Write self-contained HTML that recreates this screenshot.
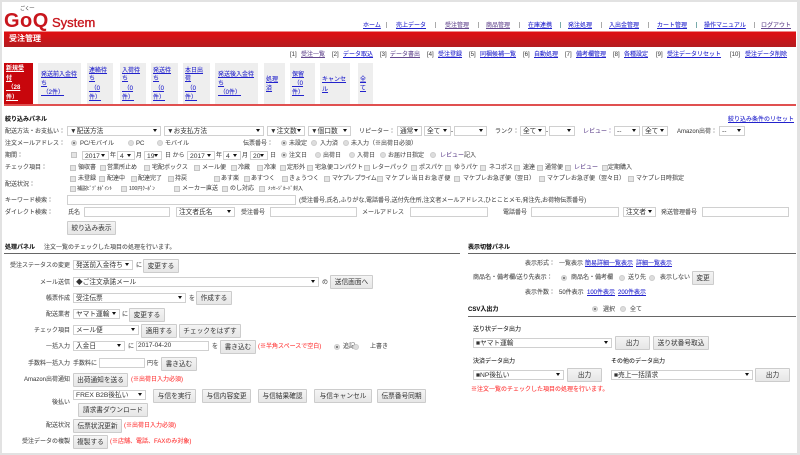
<!DOCTYPE html>
<html lang="ja"><head><meta charset="utf-8"><title>GoQ System 受注管理</title>
<style>
html,body{margin:0;padding:0;background:#fff}
body{width:800px;height:455px;position:relative;overflow:hidden;font-family:"Liberation Sans","Noto Sans CJK JP",sans-serif;color:#4c4c4c;font-size:6px;filter:blur(.25px)}
.t{position:absolute;white-space:nowrap;font-size:6px;line-height:8px;margin-top:1px;-webkit-text-stroke:.08px currentColor}
.t a,a.t{color:#22c;text-decoration:underline}
.v{color:#64488f!important}
.bd{font-weight:bold;color:#111}
.red{color:#f33}
.s{position:absolute;box-sizing:border-box;background:#fff;border:1px solid #d0d0d0;font-size:6.7px;line-height:8px;padding:1px 0 0 2px;color:#333;white-space:nowrap;overflow:hidden}
.s:after{content:"";position:absolute;right:3px;top:2px;border-left:2px solid transparent;border-right:2px solid transparent;border-top:3px solid #111}
.i{position:absolute;box-sizing:border-box;background:#fff;border:1px solid #d0d0d0;font-size:6.5px;line-height:8px;padding:0 0 0 1px;color:#333}
.b{position:absolute;box-sizing:border-box;background:linear-gradient(#f4f4f4,#e6e6e6);border:1px solid #ccc;font-size:6.7px;text-align:center;color:#333;white-space:nowrap;border-radius:1px;padding-top:1px}
.c{position:absolute;box-sizing:border-box;width:6px;height:6px;background:#e4e4e4;border:1px solid #c4c4c4;margin-left:-1px;margin-top:-.5px}
.r{position:absolute;box-sizing:border-box;width:6px;height:6px;background:#ddd;border:1px solid #ccc;border-radius:50%}
.r.on:after{content:"";position:absolute;left:1px;top:1px;width:2px;height:2px;background:#666;border-radius:50%}
.g{position:absolute;background:#eee}
.u{color:#22c;text-decoration:underline;position:absolute;white-space:nowrap;font-size:6px;line-height:11px;margin-top:1px;-webkit-text-stroke:.08px currentColor}
.l{position:absolute;height:1px;background:#666}
.p{position:absolute;width:1px;height:6px;background:#aaa;top:22px}
</style></head><body>
<!-- frame -->
<div style="position:absolute;left:0;top:0;width:800px;height:2px;background:#e2e2e2"></div>
<div style="position:absolute;left:0;top:0;width:2px;height:455px;background:#e2e2e2"></div>
<div style="position:absolute;left:797px;top:0;width:3px;height:455px;background:#e2e2e2"></div>
<div style="position:absolute;left:0;top:453px;width:800px;height:2px;background:#e2e2e2"></div>
<!-- logo -->
<div style="position:absolute;left:20px;top:6px;font-size:5px;line-height:6px;color:#333;letter-spacing:-.3px">ごく一</div>
<div style="position:absolute;left:4px;top:9px;font:bold 20px/24px 'Liberation Sans',sans-serif;color:#c8161d;letter-spacing:.5px">GoQ</div>
<div style="position:absolute;left:52px;top:15px;font:13px/16px 'Liberation Sans',sans-serif;color:#c8161d;-webkit-text-stroke:.35px #c8161d">System</div>
<!-- nav -->
<a class="t" style="left:363px;top:21px">ホーム</a><i class="p" style="left:386px"></i>
<a class="t" style="left:396px;top:21px">売上データ</a><i class="p" style="left:435px"></i>
<a class="t v" style="left:445px;top:21px">受注管理</a><i class="p" style="left:478px"></i>
<a class="t v" style="left:486px;top:21px">商品管理</a><i class="p" style="left:519px"></i>
<a class="t" style="left:528px;top:21px">在庫連携</a><i class="p" style="left:560px;background:#7aa"></i>
<a class="t" style="left:568px;top:21px">発注処理</a><i class="p" style="left:601px"></i>
<a class="t" style="left:609px;top:21px">入出金管理</a><i class="p" style="left:648px"></i>
<a class="t" style="left:657px;top:21px">カート管理</a><i class="p" style="left:696px;background:#7aa"></i>
<a class="t" style="left:704px;top:21px">操作マニュアル</a><i class="p" style="left:754px"></i>
<a class="t v" style="left:761px;top:21px">ログアウト</a>
<!-- red bar -->
<div style="position:absolute;left:4px;top:31px;width:792px;height:16px;background:linear-gradient(#e00f12,#b41c20);border-top:1px solid #e88;box-sizing:border-box"></div>
<div style="position:absolute;left:9px;top:34px;color:#fff;font-size:8px;line-height:10px;font-weight:bold">受注管理</div>
<!-- sub nav -->
<div class="t" style="left:290px;top:50px">[1]</div><a class="t v" style="left:301px;top:50px">受注一覧</a>
<div class="t" style="left:332px;top:50px">[2]</div><a class="t" style="left:343px;top:50px">データ取込</a>
<div class="t" style="left:380px;top:50px">[3]</div><a class="t v" style="left:390px;top:50px">データ書出</a>
<div class="t" style="left:427px;top:50px">[4]</div><a class="t" style="left:438px;top:50px">受注登録</a>
<div class="t" style="left:469px;top:50px">[5]</div><a class="t" style="left:480px;top:50px">同梱候補一覧</a>
<div class="t" style="left:523px;top:50px">[6]</div><a class="t" style="left:534px;top:50px">自動処理</a>
<div class="t" style="left:565px;top:50px">[7]</div><a class="t" style="left:576px;top:50px">備考欄管理</a>
<div class="t" style="left:613px;top:50px">[8]</div><a class="t" style="left:624px;top:50px">各種設定</a>
<div class="t" style="left:656px;top:50px">[9]</div><a class="t" style="left:667px;top:50px">受注データリセット</a>
<div class="t" style="left:730px;top:50px">[10]</div><a class="t" style="left:745px;top:50px">受注データ削除</a>
<!-- tabs -->
<div class="g" style="left:4px;top:63px;width:29px;height:42px;background:#c8060c"></div>
<div style="position:absolute;left:6px;top:65px;width:27px;color:#fff;font-weight:bold;font-size:6px;line-height:9.5px;text-decoration:underline">新規受<br>付<br>&nbsp;（28<br>件）</div>
<div class="g" style="left:38px;top:63px;width:43px;height:42px"></div>
<div class="g" style="left:87px;top:63px;width:26px;height:42px"></div>
<div class="g" style="left:120px;top:63px;width:26px;height:42px"></div>
<div class="g" style="left:151px;top:63px;width:27px;height:42px"></div>
<div class="g" style="left:183px;top:63px;width:27px;height:42px"></div>
<div class="g" style="left:215px;top:63px;width:43px;height:42px"></div>
<div class="g" style="left:264px;top:63px;width:21px;height:42px"></div>
<div class="g" style="left:290px;top:63px;width:25px;height:42px"></div>
<div class="g" style="left:320px;top:63px;width:30px;height:42px"></div>
<div class="g" style="left:358px;top:63px;width:15px;height:42px"></div>
<div class="u" style="left:41px;top:69px">発送前入金待</div><div class="u" style="left:41px;top:78px">ち</div><div class="u" style="left:41px;top:87px">&nbsp;（2件）</div>
<div class="u" style="left:89px;top:65px">連絡待</div><div class="u" style="left:89px;top:73px">ち</div><div class="u" style="left:89px;top:83px">&nbsp;（0</div><div class="u" style="left:89px;top:92px">件）</div>
<div class="u" style="left:122px;top:65px">入荷待</div><div class="u" style="left:122px;top:73px">ち</div><div class="u" style="left:122px;top:83px">&nbsp;（0</div><div class="u" style="left:122px;top:92px">件）</div>
<div class="u" style="left:153px;top:65px">発送待</div><div class="u" style="left:153px;top:73px">ち</div><div class="u" style="left:153px;top:83px">&nbsp;（0</div><div class="u" style="left:153px;top:92px">件）</div>
<div class="u" style="left:185px;top:65px">本日出</div><div class="u" style="left:185px;top:73px">荷</div><div class="u" style="left:185px;top:83px">&nbsp;（0</div><div class="u" style="left:185px;top:92px">件）</div>
<div class="u" style="left:218px;top:69px">発送後入金待</div><div class="u" style="left:218px;top:78px">ち</div><div class="u" style="left:218px;top:87px">&nbsp;（0件）</div>
<div class="u" style="left:266px;top:74px">処理</div><div class="u" style="left:266px;top:83px">済</div>
<div class="u" style="left:292px;top:69px">保留</div><div class="u" style="left:292px;top:78px">&nbsp;（0</div><div class="u" style="left:292px;top:87px">件）</div>
<div class="u" style="left:322px;top:74px">キャンセ</div><div class="u" style="left:322px;top:84px">ル</div>
<div class="u" style="left:360px;top:74px">全</div><div class="u" style="left:360px;top:83px">て</div>
<div style="position:absolute;left:4px;top:104px;width:792px;height:2px;background:#e05050"></div>
<!-- filter panel -->
<div class="t bd" style="left:5px;top:115px">絞り込みパネル</div>
<a class="t" style="left:728px;top:115px">絞り込み条件のリセット</a>
<div class="t" style="left:5px;top:127px">配送方法・お支払い：</div>
<div class="s" style="left:67px;top:126px;width:94px;height:10px">▼配送方法</div>
<div class="s" style="left:164px;top:126px;width:100px;height:10px">▼お支払方法</div>
<div class="s" style="left:267px;top:126px;width:38px;height:10px">▼注文数</div>
<div class="s" style="left:308px;top:126px;width:43px;height:10px">▼個口数</div>
<div class="t" style="left:359px;top:127px">リピーター：</div>
<div class="s" style="left:397px;top:126px;width:25px;height:10px">通常</div>
<div class="s" style="left:424px;top:126px;width:27px;height:10px">全て</div><div class="t" style="left:451px;top:127px">-</div>
<div class="s" style="left:454px;top:126px;width:33px;height:10px"></div>
<div class="t" style="left:495px;top:127px">ランク：</div>
<div class="s" style="left:520px;top:126px;width:26px;height:10px">全て</div><div class="t" style="left:546px;top:127px">-</div>
<div class="s" style="left:549px;top:126px;width:26px;height:10px"></div>
<div class="t v" style="left:583px;top:127px">レビュー：</div>
<div class="s" style="left:614px;top:126px;width:26px;height:10px">--</div>
<div class="s" style="left:642px;top:126px;width:26px;height:10px">全て</div>
<div class="t" style="left:677px;top:127px">Amazon出荷：</div>
<div class="s" style="left:719px;top:126px;width:26px;height:10px">--</div>

<div class="t" style="left:5px;top:139px">注文メールアドレス：</div>
<i class="r on" style="left:71px;top:140px"></i><div class="t" style="left:80px;top:139px">PC/モバイル</div>
<i class="r" style="left:128px;top:140px"></i><div class="t" style="left:136px;top:139px">PC</div>
<i class="r" style="left:157px;top:140px"></i><div class="t" style="left:165px;top:139px">モバイル</div>
<div class="t" style="left:243px;top:139px">伝票番号：</div>
<i class="r on" style="left:281px;top:140px"></i><div class="t" style="left:289px;top:139px">未設定</div>
<i class="r" style="left:311px;top:140px"></i><div class="t" style="left:320px;top:139px">入力済</div>
<i class="r" style="left:343px;top:140px"></i><div class="t" style="left:351px;top:139px">未入力（※出荷日必須）</div>

<div class="t" style="left:5px;top:151px">期間：</div>
<i class="c" style="left:72px;top:152px"></i>
<div class="s" style="left:82px;top:151px;width:27px;height:9px">2017</div><div class="t" style="left:110px;top:151px">年</div>
<div class="s" style="left:117px;top:151px;width:18px;height:9px">4</div><div class="t" style="left:136px;top:151px">月</div>
<div class="s" style="left:144px;top:151px;width:18px;height:9px">19</div><div class="t" style="left:165px;top:151px">日 から</div>
<div class="s" style="left:187px;top:151px;width:28px;height:9px">2017</div><div class="t" style="left:216px;top:151px">年</div>
<div class="s" style="left:223px;top:151px;width:18px;height:9px">4</div><div class="t" style="left:242px;top:151px">月</div>
<div class="s" style="left:250px;top:151px;width:18px;height:9px">20</div><div class="t" style="left:270px;top:151px">日</div>
<i class="r on" style="left:281px;top:152px"></i><div class="t" style="left:289px;top:151px">注文日</div>
<i class="r" style="left:315px;top:152px"></i><div class="t" style="left:323px;top:151px">出荷日</div>
<i class="r" style="left:349px;top:152px"></i><div class="t" style="left:357px;top:151px">入荷日</div>
<i class="r" style="left:380px;top:152px"></i><div class="t" style="left:388px;top:151px">お届け日指定</div>
<i class="r" style="left:430px;top:152px"></i><div class="t" style="left:440px;top:151px"><span class="v">レビュー</span>記入</div>

<div class="t" style="left:5px;top:163px">チェック項目：</div>
<i class="c" style="left:71px;top:165px"></i><div class="t" style="left:78px;top:163px">領収書</div>
<i class="c" style="left:101px;top:165px"></i><div class="t" style="left:107px;top:163px">営業所止め</div>
<i class="c" style="left:145px;top:165px"></i><div class="t" style="left:152px;top:163px">宅配ボックス</div>
<i class="c" style="left:195px;top:165px"></i><div class="t" style="left:202px;top:163px">メール便</div>
<i class="c" style="left:232px;top:165px"></i><div class="t" style="left:238px;top:163px">冷蔵</div>
<i class="c" style="left:258px;top:165px"></i><div class="t" style="left:264px;top:163px">冷凍</div>
<i class="c" style="left:281px;top:165px"></i><div class="t" style="left:287px;top:163px">定形外</div>
<i class="c" style="left:308px;top:165px"></i><div class="t" style="left:315px;top:163px">宅急便コンパクト</div>
<i class="c" style="left:365px;top:165px"></i><div class="t" style="left:372px;top:163px">レターパック</div>
<i class="c" style="left:412px;top:165px"></i><div class="t" style="left:419px;top:163px">ポスパケ</div>
<i class="c" style="left:446px;top:165px"></i><div class="t" style="left:454px;top:163px">ゆうパケ</div>
<i class="c" style="left:481px;top:165px"></i><div class="t" style="left:489px;top:163px">ネコポス</div>
<i class="c" style="left:515px;top:165px"></i><div class="t" style="left:523px;top:163px">速達</div>
<i class="c" style="left:538px;top:165px"></i><div class="t" style="left:545px;top:163px">通常便</div>
<i class="c" style="left:566px;top:165px"></i><div class="t v" style="left:574px;top:163px">レビュー</div>
<i class="c" style="left:603px;top:165px"></i><div class="t" style="left:608px;top:163px">定期購入</div>

<div class="t" style="left:5px;top:180px">配送状況：</div>
<i class="c" style="left:71px;top:176px"></i><div class="t" style="left:78px;top:174px">未登録</div>
<i class="c" style="left:100px;top:176px"></i><div class="t" style="left:107px;top:174px">配達中</div>
<i class="c" style="left:132px;top:176px"></i><div class="t" style="left:138px;top:174px">配達完了</div>
<i class="c" style="left:169px;top:176px"></i><div class="t" style="left:175px;top:174px">持戻</div>
<i class="c" style="left:215px;top:176px"></i><div class="t" style="left:221px;top:174px">あす楽</div>
<i class="c" style="left:245px;top:176px"></i><div class="t" style="left:251px;top:174px">あすつく</div>
<i class="c" style="left:283px;top:176px"></i><div class="t" style="left:289px;top:174px">きょうつく</div>
<i class="c" style="left:325px;top:176px"></i><div class="t" style="left:332px;top:174px;letter-spacing:-.6px">マケプレ プライム</div>
<i class="c" style="left:378px;top:176px"></i><div class="t" style="left:385px;top:174px;letter-spacing:.6px">マケプレ当日お急ぎ便</div>
<i class="c" style="left:455px;top:176px"></i><div class="t" style="left:463px;top:174px">マケプレお急ぎ便（翌日）</div>
<i class="c" style="left:540px;top:176px"></i><div class="t" style="left:547px;top:174px">マケプレお急ぎ便（翌々日）</div>
<i class="c" style="left:629px;top:176px"></i><div class="t" style="left:636px;top:174px">マケプレ日時指定</div>

<i class="c" style="left:71px;top:186px"></i><div class="t" style="left:77px;top:184px;font-size:5px">補説ﾋﾞﾃﾞｵﾎﾟｲﾝﾄ</div>
<i class="c" style="left:122px;top:186px"></i><div class="t" style="left:129px;top:184px;font-size:5px">100円ｸｰﾎﾟﾝ</div>
<i class="c" style="left:175px;top:186px"></i><div class="t" style="left:182px;top:184px">メーカー直送</div>
<i class="c" style="left:223px;top:186px"></i><div class="t" style="left:230px;top:184px">のし対応</div>
<i class="c" style="left:260px;top:186px"></i><div class="t" style="left:268px;top:184px;font-size:5px">ﾒｯｾｰｼﾞｶｰﾄﾞ封入</div>

<div class="t" style="left:5px;top:196px">キーワード検索：</div>
<div class="i" style="left:67px;top:195px;width:229px;height:10px"></div>
<div class="t" style="left:299px;top:196px">(受注番号,氏名,ふりがな,電話番号,送付先住所,注文者メールアドレス,ひとことメモ,発注先,お荷物伝票番号)</div>

<div class="t" style="left:5px;top:208px">ダイレクト検索：</div>
<div class="t" style="left:68px;top:208px">氏名</div>
<div class="i" style="left:84px;top:207px;width:86px;height:10px"></div>
<div class="s" style="left:176px;top:207px;width:59px;height:10px">注文者氏名</div>
<div class="t" style="left:241px;top:208px">受注番号</div>
<div class="i" style="left:270px;top:207px;width:87px;height:10px"></div>
<div class="t" style="left:362px;top:208px">メールアドレス</div>
<div class="i" style="left:410px;top:207px;width:78px;height:10px"></div>
<div class="t" style="left:503px;top:208px">電話番号</div>
<div class="i" style="left:531px;top:207px;width:88px;height:10px"></div>
<div class="s" style="left:623px;top:207px;width:33px;height:10px">注文者</div>
<div class="t" style="left:661px;top:208px">発送管理番号</div>
<div class="i" style="left:702px;top:207px;width:87px;height:10px"></div>
<div class="b" style="left:67px;top:221px;width:49px;height:14px;line-height:11px">絞り込み表示</div>

<!-- process panel -->
<div class="t bd" style="left:5px;top:243px">処理パネル</div>
<div class="t" style="left:44px;top:243px">注文一覧のチェックした項目の処理を行います。</div>
<div class="l" style="left:4px;top:253px;width:456px"></div>
<div class="l" style="left:468px;top:253px;width:328px"></div>

<div class="t" style="right:730px;top:261px">受注ステータスの変更</div>
<div class="s" style="left:73px;top:260px;width:60px;height:10px">発送前入金待ち</div>
<div class="t" style="left:136px;top:261px">に</div>
<div class="b" style="left:143px;top:259px;width:36px;height:14px;line-height:11px">変更する</div>

<div class="t" style="right:730px;top:278px">メール送信</div>
<div class="s" style="left:73px;top:277px;width:246px;height:10px">◆ご注文承諾メール</div>
<div class="t" style="left:322px;top:278px">の</div>
<div class="b" style="left:330px;top:275px;width:43px;height:14px;line-height:11px">送信画面へ</div>

<div class="t" style="right:730px;top:294px">帳票作成</div>
<div class="s" style="left:73px;top:293px;width:113px;height:10px">受注伝票</div>
<div class="t" style="left:189px;top:294px">を</div>
<div class="b" style="left:196px;top:291px;width:36px;height:14px;line-height:11px">作成する</div>

<div class="t" style="right:730px;top:310px">配送業者</div>
<div class="s" style="left:73px;top:309px;width:47px;height:10px">ヤマト運輸</div>
<div class="t" style="left:122px;top:310px">に</div>
<div class="b" style="left:129px;top:308px;width:36px;height:14px;line-height:11px">変更する</div>

<div class="t" style="right:730px;top:326px">チェック項目</div>
<div class="s" style="left:73px;top:325px;width:66px;height:10px">メール便</div>
<div class="b" style="left:141px;top:324px;width:36px;height:14px;line-height:11px">適用する</div>
<div class="b" style="left:179px;top:324px;width:62px;height:14px;line-height:11px">チェックをはずす</div>

<div class="t" style="right:730px;top:342px">一括入力</div>
<div class="s" style="left:73px;top:341px;width:52px;height:10px">入金日</div>
<div class="t" style="left:128px;top:342px">に</div>
<div class="i" style="left:136px;top:341px;width:73px;height:10px">2017-04-20</div>
<div class="t" style="left:212px;top:342px">を</div>
<div class="b" style="left:220px;top:340px;width:36px;height:14px;line-height:11px">書き込む</div>
<div class="t red" style="left:258px;top:342px">(※半角スペースで空白)</div>
<i class="r on" style="left:334px;top:344px"></i><div class="t" style="left:343px;top:342px">追記</div>
<i class="r" style="left:353px;top:344px"></i><div class="t" style="left:370px;top:342px">上書き</div>

<div class="t" style="right:730px;top:359px">手数料一括入力</div>
<div class="t" style="left:73px;top:359px">手数料に</div>
<div class="i" style="left:99px;top:358px;width:46px;height:10px"></div>
<div class="t" style="left:147px;top:359px">円を</div>
<div class="b" style="left:161px;top:357px;width:36px;height:14px;line-height:11px">書き込む</div>

<div class="t" style="right:730px;top:375px">Amazon出荷通知</div>
<div class="b" style="left:73px;top:373px;width:55px;height:14px;line-height:11px">出荷通知を送る</div>
<div class="t red" style="left:131px;top:375px">(※出荷日入力必須)</div>

<div class="t" style="right:730px;top:398px">後払い</div>
<div class="s" style="left:73px;top:390px;width:73px;height:10px">FREX B2B後払い</div>
<div class="b" style="left:153px;top:389px;width:43px;height:14px;line-height:11px">与信を実行</div>
<div class="b" style="left:202px;top:389px;width:49px;height:14px;line-height:11px">与信内容変更</div>
<div class="b" style="left:258px;top:389px;width:49px;height:14px;line-height:11px">与信結果確認</div>
<div class="b" style="left:314px;top:389px;width:58px;height:14px;line-height:11px">与信キャンセル</div>
<div class="b" style="left:377px;top:389px;width:49px;height:14px;line-height:11px">伝票番号同期</div>
<div class="b" style="left:78px;top:403px;width:70px;height:14px;line-height:11px">請求書ダウンロード</div>

<div class="t" style="right:730px;top:421px">配送状況</div>
<div class="b" style="left:73px;top:419px;width:49px;height:14px;line-height:11px">伝票状況更新</div>
<div class="t red" style="left:124px;top:421px">(※出荷日入力必須)</div>

<div class="t" style="right:730px;top:437px">受注データの複製</div>
<div class="b" style="left:73px;top:435px;width:35px;height:14px;line-height:11px">複製する</div>
<div class="t red" style="left:110px;top:437px">(※店舗、電話、FAXのみ対象)</div>

<!-- right panel -->
<div class="t bd" style="left:468px;top:243px">表示切替パネル</div>
<div class="t" style="left:525px;top:259px">表示形式：</div>
<div class="t" style="left:559px;top:259px">一覧表示</div>
<a class="t" style="left:585px;top:259px">簡易詳細一覧表示</a>
<a class="t" style="left:636px;top:259px">詳細一覧表示</a>
<div class="t" style="left:473px;top:273px">商品名・備考欄/送り先表示：</div>
<i class="r on" style="left:561px;top:275px"></i><div class="t" style="left:571px;top:273px">商品名・備考欄</div>
<i class="r" style="left:619px;top:275px"></i><div class="t" style="left:628px;top:273px">送り先</div>
<i class="r" style="left:649px;top:275px"></i><div class="t" style="left:660px;top:273px">表示しない</div>
<div class="b" style="left:692px;top:271px;width:22px;height:14px;line-height:11px">変更</div>
<div class="t" style="left:525px;top:288px">表示件数：</div>
<div class="t" style="left:559px;top:288px">50件表示</div>
<a class="t" style="left:587px;top:288px">100件表示</a>
<a class="t" style="left:618px;top:288px">200件表示</a>
<div class="t bd" style="left:468px;top:305px">CSV入出力</div>
<i class="r on" style="left:592px;top:306px"></i><div class="t" style="left:603px;top:305px">選択</div>
<i class="r" style="left:620px;top:306px"></i><div class="t" style="left:630px;top:305px">全て</div>
<div class="l" style="left:468px;top:316px;width:328px"></div>
<div class="t" style="left:473px;top:325px;color:#222">送り状データ出力</div>
<div class="s" style="left:473px;top:338px;width:139px;height:10px">■ヤマト運輸</div>
<div class="b" style="left:615px;top:336px;width:35px;height:14px;line-height:11px">出力</div>
<div class="b" style="left:653px;top:336px;width:56px;height:14px;line-height:11px">送り状番号取込</div>
<div class="t" style="left:473px;top:357px;color:#222">決済データ出力</div>
<div class="t" style="left:611px;top:357px;color:#222">その他のデータ出力</div>
<div class="s" style="left:473px;top:370px;width:91px;height:10px">■NP後払い</div>
<div class="b" style="left:567px;top:368px;width:35px;height:14px;line-height:11px">出力</div>
<div class="s" style="left:611px;top:370px;width:142px;height:10px">■売上一括請求</div>
<div class="b" style="left:755px;top:368px;width:35px;height:14px;line-height:11px">出力</div>
<div class="t red" style="left:471px;top:385px">※注文一覧のチェックした項目の処理を行います。</div>
</body></html>
